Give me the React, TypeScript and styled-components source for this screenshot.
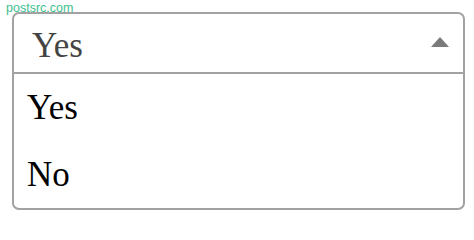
import React, { useState } from "react";
import styled, { createGlobalStyle } from "styled-components";

const GlobalStyle = createGlobalStyle`
  html, body {
    margin: 0;
    padding: 0;
    background: #ffffff;
  }
  body {
    font-family: "Liberation Serif", "Times New Roman", serif;
  }
`;

const Page = styled.div`
  position: relative;
  width: 474px;
  height: 228px;
  padding: 12px 13px 0 12px;
  box-sizing: border-box;
`;

const Watermark = styled.div`
  position: absolute;
  left: 6px;
  top: 1px;
  font-family: "Liberation Sans", Arial, sans-serif;
  font-size: 12.5px;
  line-height: 14px;
  color: #3fbf8f;
  z-index: 2;
`;

const Select = styled.div`
  width: 100%;
  border: 2px solid #a2a2a2;
  border-radius: 7px;
  display: flex;
  flex-direction: column;
  background: #ffffff;
`;

const Header = styled.div`
  height: 60px;
  display: flex;
  align-items: center;
  justify-content: space-between;
  padding: 5px 14px 0 18px;
  box-sizing: border-box;
  border-bottom: 2px solid #a2a2a2;
  font-size: 35px;
  line-height: 40px;
  color: #444444;
  cursor: pointer;
`;

const Arrow = styled.span<{ open: boolean }>`
  width: 0;
  height: 0;
  margin-top: -8px;
  border-left: 9px solid transparent;
  border-right: 9px solid transparent;
  ${(props) =>
    props.open
      ? "border-bottom: 10px solid #7a7a7a;"
      : "border-top: 10px solid #7a7a7a;"}
`;

const OptionList = styled.div`
  display: flex;
  flex-direction: column;
`;

const Option = styled.div`
  height: 67px;
  display: flex;
  align-items: center;
  padding: 0 0 0 13px;
  font-size: 35px;
  line-height: 40px;
  color: #000000;
  cursor: pointer;
`;

const options = ["Yes", "No"];

const App: React.FunctionComponent = () => {
  const [selected, setSelected] = useState("Yes");
  const [open, setOpen] = useState(true);

  return (
    <Page>
      <GlobalStyle />
      <Watermark>postsrc.com</Watermark>
      <Select>
        <Header onClick={() => setOpen(!open)}>
          {selected}
          <Arrow open={open} />
        </Header>
        {open && (
          <OptionList>
            {options.map((option) => (
              <Option
                key={option}
                onClick={() => {
                  setSelected(option);
                }}
              >
                {option}
              </Option>
            ))}
          </OptionList>
        )}
      </Select>
    </Page>
  );
};

export default App;
